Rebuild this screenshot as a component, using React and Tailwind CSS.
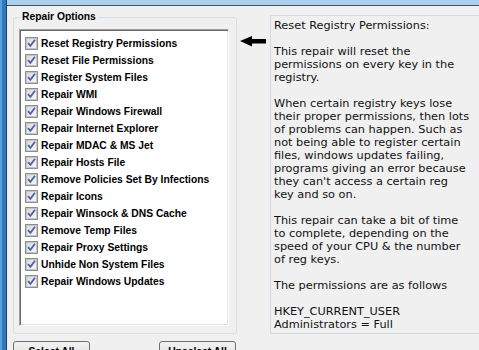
import React from "react";

const items = [
  "Reset Registry Permissions",
  "Reset File Permissions",
  "Register System Files",
  "Repair WMI",
  "Repair Windows Firewall",
  "Repair Internet Explorer",
  "Repair MDAC & MS Jet",
  "Repair Hosts File",
  "Remove Policies Set By Infections",
  "Repair Icons",
  "Repair Winsock & DNS Cache",
  "Remove Temp Files",
  "Repair Proxy Settings",
  "Unhide Non System Files",
  "Repair Windows Updates",
];

const lines = [
  "Reset Registry Permissions:",
  "",
  "This repair will reset the",
  "permissions on every key in the",
  "registry.",
  "",
  "When certain registry keys lose",
  "their proper permissions, then lots",
  "of problems can happen. Such as",
  "not being able to register certain",
  "files, windows updates failing,",
  "programs giving an error because",
  "they can't access a certain reg",
  "key and so on.",
  "",
  "This repair can take a bit of time",
  "to complete, depending on the",
  "speed of your CPU & the number",
  "of reg keys.",
  "",
  "The permissions are as follows",
  "",
  "HKEY_CURRENT_USER",
  "Administrators = Full",
];

function CheckBox() {
  return (
    <div className="w-[13px] h-[13px] border border-[#8f8f8f] bg-[#f4f4f4] flex items-center justify-center shrink-0">
      <div className="w-[11px] h-[11px] border border-[#c4c4c4] bg-gradient-to-br from-[#d8dbe0] to-[#f7f7f7] flex items-center justify-center">
        <svg width="9" height="9" viewBox="0 0 9 9">
          <path d="M1 4.2 L3.4 6.8 L8 0.8" fill="none" stroke="#4d62a0" strokeWidth="1.8" />
        </svg>
      </div>
    </div>
  );
}

export default function App() {
  return (
    <div
      className="w-[479px] h-[350px] overflow-hidden flex bg-[#f0f0f0] text-black"
      style={{ fontFamily: '"Liberation Sans", Arial, sans-serif' }}
    >
      <div className="w-[7px] h-full flex shrink-0">
        <div className="w-[2px] h-full bg-[#5aa0d9]" />
        <div className="w-[4px] h-full bg-[#2c7bbf]" />
        <div className="w-[1px] h-full bg-[#1d3e5c]" />
      </div>
      <div className="flex-1 flex flex-col">
        <div className="h-[5px] bg-[#acd0ec] border-b border-[#40596f] shrink-0" style={{ height: 6 }} />
        <div className="flex items-start pl-[6px]">
          <div className="relative mt-[11px] w-[224px] h-[317px] border border-[#d5dfe5] rounded-[3px] shrink-0">
            <div className="absolute left-[6px] top-[-8px] px-[2px] bg-[#f0f0f0] text-[10.3px] font-bold leading-[13px]">
              Repair Options
            </div>
            <div className="mt-[11px] ml-[5px] w-[210px] h-[297px] bg-white border border-t-[#a0a0a0] border-l-[#a0a0a0] border-r-[#ffffff] border-b-[#ffffff] shadow-[inset_1px_1px_0_#696969,inset_-1px_-1px_0_#e3e3e3] pt-[5px] pl-[5px]">
              {items.map((t) => (
                <div key={t} className="h-[17px] flex items-center gap-[3px]">
                  <CheckBox />
                  <span className="text-[10.3px] font-bold whitespace-nowrap leading-[13px]">{t}</span>
                </div>
              ))}
            </div>
          </div>
          <svg className="mt-[30px] ml-[3px] shrink-0" width="27" height="11" viewBox="0 0 27 11">
            <polygon points="0,5 12,0 12,3 26,3 26,7.5 12,7.5 12,10.5" fill="#000" />
          </svg>
          <div
            className="mt-[9px] ml-[3px] flex-1 h-[319px] border-t border-l border-b border-[#d3d9e0] pt-[3px] pl-[3px] text-[11.3px] leading-[13px] text-[#111]"
            style={{ fontFamily: '"DejaVu Sans", Verdana, sans-serif' }}
          >
            {lines.map((l, i) => (
              <div key={i} className="h-[13px] whitespace-nowrap">{l}</div>
            ))}
          </div>
        </div>
        <div className="flex pl-[6px] mt-[7px] gap-[69px]">
          <div className="w-[77px] h-[23px] border border-[#707070] rounded-[3px] bg-gradient-to-b from-[#f2f2f2] to-[#dcdcdc] flex justify-center pt-[3px] text-[10.3px] font-bold leading-[13px]">
            Select All
          </div>
          <div className="w-[77px] h-[23px] border border-[#707070] rounded-[3px] bg-gradient-to-b from-[#f2f2f2] to-[#dcdcdc] flex justify-center pt-[3px] text-[10.3px] font-bold leading-[13px]">
            Unselect All
          </div>
        </div>
      </div>
    </div>
  );
}
